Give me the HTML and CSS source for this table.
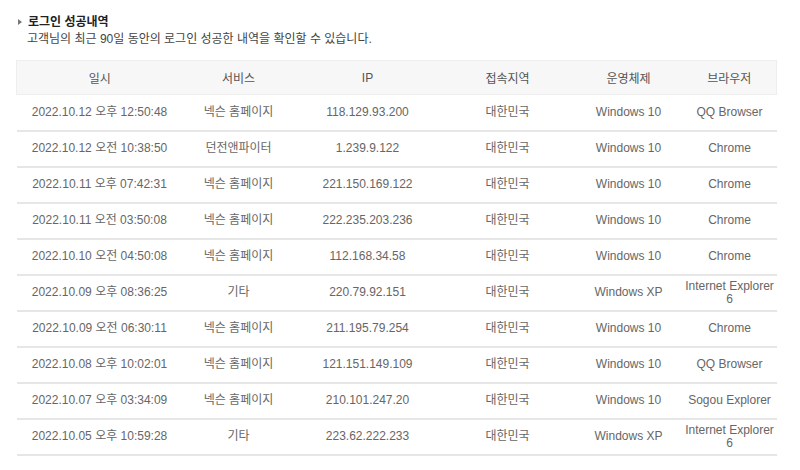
FILE: index.html
```html
<!DOCTYPE html>
<html lang="ko">
<head>
<meta charset="utf-8">
<link rel="stylesheet" href="styles.css">
</head>
<body>
<div class="wrap">
  <h2 class="title"><span class="tri"></span>로그인 성공내역</h2>
  <p class="desc">고객님의 최근 90일 동안의 로그인 성공한 내역을 확인할 수 있습니다.</p>
  <table class="log">
    <colgroup>
      <col class="c1"><col class="c2"><col class="c3"><col class="c4"><col class="c5"><col class="c6">
    </colgroup>
    <thead>
      <tr><th>일시</th><th>서비스</th><th>IP</th><th>접속지역</th><th>운영체제</th><th>브라우저</th></tr>
    </thead>
    <tbody>
      <tr><td>2022.10.12 오후 12:50:48</td><td>넥슨 홈페이지</td><td>118.129.93.200</td><td>대한민국</td><td>Windows 10</td><td>QQ Browser</td></tr>
      <tr><td>2022.10.12 오전 10:38:50</td><td>던전앤파이터</td><td>1.239.9.122</td><td>대한민국</td><td>Windows 10</td><td>Chrome</td></tr>
      <tr><td>2022.10.11 오후 07:42:31</td><td>넥슨 홈페이지</td><td>221.150.169.122</td><td>대한민국</td><td>Windows 10</td><td>Chrome</td></tr>
      <tr><td>2022.10.11 오전 03:50:08</td><td>넥슨 홈페이지</td><td>222.235.203.236</td><td>대한민국</td><td>Windows 10</td><td>Chrome</td></tr>
      <tr><td>2022.10.10 오전 04:50:08</td><td>넥슨 홈페이지</td><td>112.168.34.58</td><td>대한민국</td><td>Windows 10</td><td>Chrome</td></tr>
      <tr><td>2022.10.09 오후 08:36:25</td><td>기타</td><td>220.79.92.151</td><td>대한민국</td><td>Windows XP</td><td>Internet Explorer<br>6</td></tr>
      <tr><td>2022.10.09 오전 06:30:11</td><td>넥슨 홈페이지</td><td>211.195.79.254</td><td>대한민국</td><td>Windows 10</td><td>Chrome</td></tr>
      <tr><td>2022.10.08 오후 10:02:01</td><td>넥슨 홈페이지</td><td>121.151.149.109</td><td>대한민국</td><td>Windows 10</td><td>QQ Browser</td></tr>
      <tr><td>2022.10.07 오후 03:34:09</td><td>넥슨 홈페이지</td><td>210.101.247.20</td><td>대한민국</td><td>Windows 10</td><td>Sogou Explorer</td></tr>
      <tr><td>2022.10.05 오후 10:59:28</td><td>기타</td><td>223.62.222.233</td><td>대한민국</td><td>Windows XP</td><td>Internet Explorer<br>6</td></tr>
    </tbody>
  </table>
</div>
</body>
</html>
```

FILE: styles.css
```css
* { box-sizing: border-box; }
html, body { margin: 0; padding: 0; background: #fff; }
body {
  font-family: "Liberation Sans", "Noto Sans CJK KR", sans-serif;
  color: #666;
}
.wrap { padding: 13px 24px 0 16px; }
.title {
  margin: 0;
  font-size: 12px;
  font-weight: bold;
  color: #222;
  line-height: 18px;
  display: flex;
  align-items: center;
  padding-left: 2px;
}
.tri {
  width: 0; height: 0;
  border-top: 3px solid transparent;
  border-bottom: 3px solid transparent;
  border-left: 4px solid #777;
  margin-right: 6px;
}
.desc {
  margin: 0 0 0 11px;
  font-size: 12px;
  line-height: 17px;
  color: #444;
}
.log {
  margin-top: 12px;
  width: 760px;
  border-collapse: collapse;
  table-layout: fixed;
  font-size: 12px;
}
.c1 { width: 166px; }
.c2 { width: 112px; }
.c3 { width: 146px; }
.c4 { width: 134px; }
.c5 { width: 108px; }
.c6 { width: 94px; }
.log th {
  height: 34px;
  background: #f7f7f7;
  font-weight: normal;
  color: #555;
  border-top: 1px solid #eee;
  border-bottom: 1px solid #eee;
  text-align: center;
  padding: 0;
}
.log thead tr { border-left: 1px solid #eee; border-right: 1px solid #eee; }
.log td {
  height: 36px;
  text-align: center;
  color: #666;
  border-bottom: 2px solid #e6e6e6;
  line-height: 13px;
  padding: 0;
}
```
